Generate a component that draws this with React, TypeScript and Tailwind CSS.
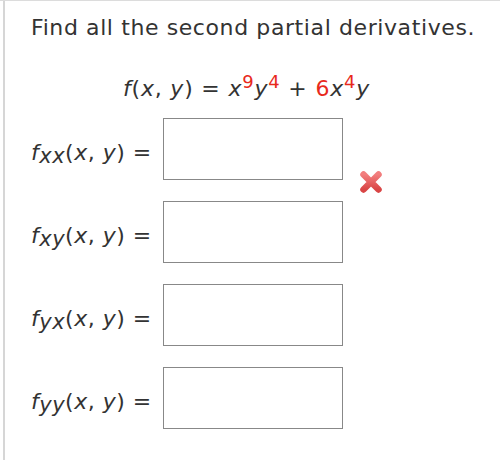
import React from 'react'

const font = { fontFamily: '"DejaVu Sans", Verdana, sans-serif' }

function Label({ sub }: { sub: string }) {
  return (
    <span className="text-[22px] tracking-[0.5px] text-[#333] whitespace-nowrap">
      <i>f</i>
      <sub className="text-[21px] italic relative top-[3px] align-baseline">{sub}</sub>
      (<i>x</i>, <i>y</i>) =
    </span>
  )
}

function RedX() {
  return (
    <svg width="26" height="26" viewBox="0 0 26 26" className="ml-[15px] -mb-[15px] shrink-0">
      <defs>
        <linearGradient id="xg" x1="0" y1="0" x2="0" y2="1">
          <stop offset="0" stopColor="#f27e7e" />
          <stop offset="1" stopColor="#d94545" />
        </linearGradient>
      </defs>
      <path d="M5.5 5.5 L20.5 20.5 M20.5 5.5 L5.5 20.5" stroke="url(#xg)" strokeWidth="6.5" strokeLinecap="round" />
    </svg>
  )
}

function Sup({ children }: { children: React.ReactNode }) {
  return <sup className="text-[#e8291c] text-[18px] tracking-[0.8px] relative -top-[8px] align-baseline">{children}</sup>
}

const rows = ['xx', 'xy', 'yx', 'yy']

export default function App() {
  return (
    <div className="w-[500px] h-[460px] bg-white border-t border-[#dcdcdc] overflow-hidden" style={font}>
      <div className="ml-[3px] h-full border-l-2 border-[#d6d6d6] pl-[26px] pt-[11px]">
        <h1 className="text-[22px] tracking-[0.6px] leading-[32px] text-[#333] whitespace-nowrap">
          Find all the second partial derivatives.
        </h1>
        <div className="mt-[29px] pl-[92px] text-[22px] tracking-[0.8px] leading-[32px] text-[#333] whitespace-nowrap">
          <i>f</i>(<i>x</i>, <i>y</i>) = <i>x</i>
          <Sup>9</Sup>
          <i>y</i>
          <Sup>4</Sup> + <span className="text-[#e8291c]">6</span>
          <i>x</i>
          <Sup>4</Sup>
          <i>y</i>
        </div>
        <div className="mt-[13px] flex flex-col gap-[21px]">
          {rows.map((r, i) => (
            <div key={r} className="flex items-end">
              <div className="w-[132px] pb-[11px]">
                <Label sub={r} />
              </div>
              <div className="w-[180px] h-[62px] border-[1.5px] border-[#888] bg-white" />
              {i === 0 && <RedX />}
            </div>
          ))}
        </div>
      </div>
    </div>
  )
}
